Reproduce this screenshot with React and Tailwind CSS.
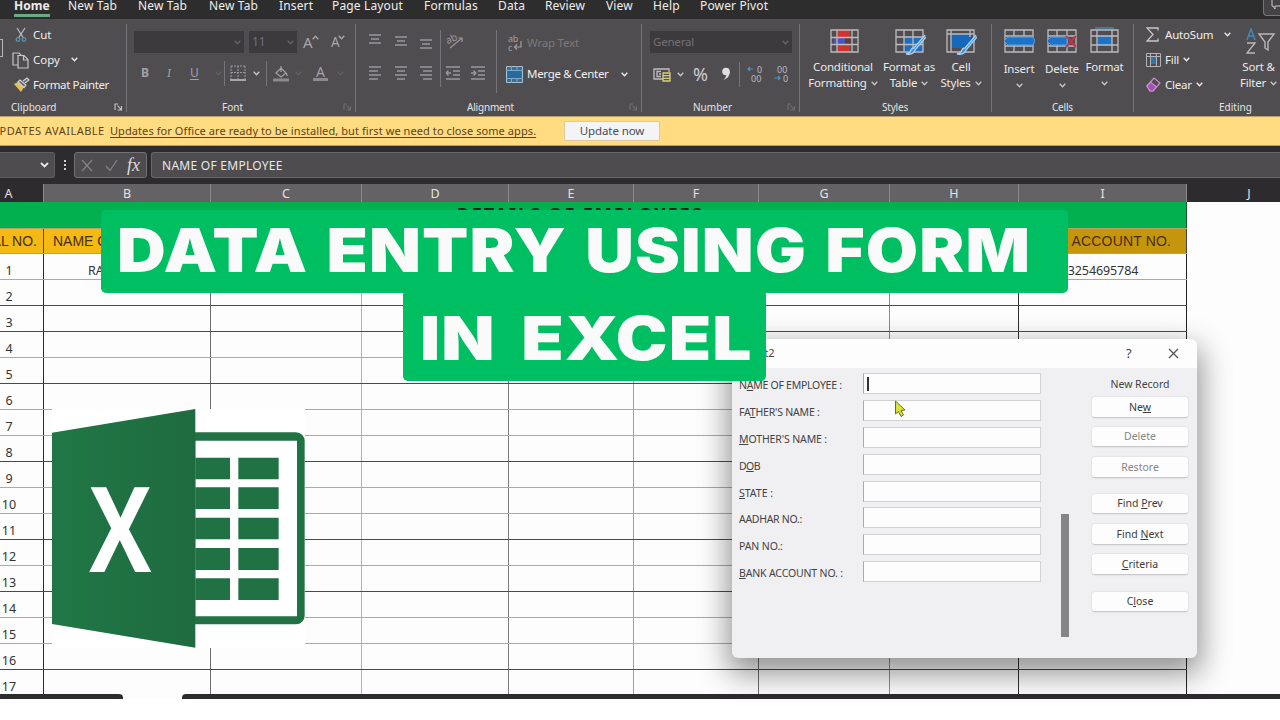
import { useState } from "react";

const tabs = [
    { name: "Home", width: "w-[54px]" },
    { name: "New Tab", width: "w-[70px]" },
    { name: "New Tab", width: "w-[71px]" },
    { name: "New Tab", width: "w-[70px]" },
    { name: "Insert", width: "w-[53px]" },
    { name: "Page Layout", width: "w-[92px]" },
    { name: "Formulas", width: "w-[74px]" },
    { name: "Data", width: "w-[47px]" },
    { name: "Review", width: "w-[61px]" },
    { name: "View", width: "w-[47px]" },
    { name: "Help", width: "w-[47px]" },
    { name: "Power Pivot", width: "w-[80px]" },
];

const columns = [
    { name: "A", width: "w-[44px]", head: "bg-[#2d2b2e] pr-[26px]", line: "border-[#2a2a2a]" },
    { name: "B", width: "w-[167px]", head: "bg-[#646264]", line: "border-[#6e6e6e]" },
    { name: "C", width: "w-[151px]", head: "bg-[#646264]", line: "border-[#b4b4b4]" },
    { name: "D", width: "w-[147px]", head: "bg-[#646264]", line: "border-[#7c7c7c]" },
    { name: "E", width: "w-[125px]", head: "bg-[#646264]", line: "border-[#a0a0a0]" },
    { name: "F", width: "w-[125px]", head: "bg-[#646264]", line: "border-[#6e6e6e]" },
    { name: "G", width: "w-[131px]", head: "bg-[#646264]", line: "border-[#8c8c8c]" },
    { name: "H", width: "w-[129px]", head: "bg-[#646264]", line: "border-[#2f2f2f]" },
    { name: "I", width: "w-[168px]", head: "bg-[#646264]", line: "border-[#222222]" },
];

// some row borders are drawn darker than the others
const darkRows = [2, 3, 5, 8, 11, 13, 16];
const rows = Array.from({ length: 17 }, (_, i) => i + 1);

const fields = [
    { before: "N", key: "A", after: "ME OF EMPLOYEE :", track: "tracking-[-0.26px]" },
    { before: "FA", key: "T", after: "HER'S NAME :", track: "tracking-[-0.2px]" },
    { before: "", key: "M", after: "OTHER'S NAME :", track: "tracking-[-0.12px]" },
    { before: "D", key: "O", after: "B", track: "tracking-[-0.6px]" },
    { before: "", key: "S", after: "TATE :", track: "tracking-[0px]" },
    { before: "AADHAR NO.:", key: "", after: "", track: "tracking-[-0.3px]" },
    { before: "PAN NO.:", key: "", after: "", track: "tracking-[-0.1px]" },
    { before: "", key: "B", after: "ANK ACCOUNT NO. :", track: "tracking-[-0.15px]" },
];

const actions = [
    { before: "Ne", key: "w", after: "", gap: "mt-[7px]", color: "text-[#3c3c3c]" },
    { before: "Delete", key: "", after: "", gap: "mt-[9px]", color: "text-[#858585]" },
    { before: "Restore", key: "", after: "", gap: "mt-[10px]", color: "text-[#858585]" },
    { before: "Find ", key: "P", after: "rev", gap: "mt-[16px]", color: "text-[#3c3c3c]" },
    { before: "Find ", key: "N", after: "ext", gap: "mt-[10px]", color: "text-[#3c3c3c]" },
    { before: "", key: "C", after: "riteria", gap: "mt-[9.500px]", color: "text-[#3c3c3c]" },
    { before: "C", key: "l", after: "ose", gap: "mt-[17px]", color: "text-[#3c3c3c]" },
];

function Chevron({ className = "" }) {
    return (
        <svg className={`shrink-0 ${className}`} width="7" height="5" viewBox="0 0 7 5" fill="none" stroke="currentColor" strokeWidth="1.3">
            <path d="M.7.8 3.5 3.7 6.3.8" />
        </svg>
    );
}

function Launcher({ className = "" }) {
    return (
        <svg className={className} width="9" height="8" viewBox="0 0 9 8" fill="none" stroke="currentColor" strokeWidth="1.1">
            <path d="M1 7V1h3M3.5 2.5 7 6.3M7.5 3v4h-4" />
        </svg>
    );
}

function Lines({ d }) {
    return (
        <svg width="14" height="15" viewBox="0 0 14 15" fill="none" stroke="#99979a" strokeWidth="1.3">
            <path d={d} />
        </svg>
    );
}

function Divider({ className }) {
    return <div className={`w-px shrink-0 bg-[#77757a] ${className}`} />;
}

function Group({ label, className, labelClass, launcher, children }) {
    return (
        <section className={`flex h-[97px] shrink-0 flex-col ${className}`}>
            <div className="flex h-[80px] w-full">
                <div className="h-full min-w-0 flex-1">{children}</div>
                <Divider className="mt-[5px] h-[88px]" />
            </div>
            <div className="flex h-[17px] items-center justify-between pr-[4px] pb-[1px]">
                <span className={`text-[10px] leading-[14px] text-[#e4e4e4] ${labelClass}`}>{label}</span>
                {launcher && <Launcher className={launcher} />}
            </div>
        </section>
    );
}

function Clipboard() {
    return (
        <Group label="Clipboard" className="w-[127px]" labelClass="ml-[11px] tracking-[0px]" launcher="text-[#c8c8c8]">
            <div className="flex h-full">
                <div className="mt-[20px] h-[18px] w-[3px] border-y border-r border-[#b5b5b5]" />
                <div className="flex flex-col pt-[3px] text-[11.5px] leading-[16px] text-[#eeeeee]">
                    <div className="flex h-[25px] items-center">
                        <svg className="ml-[12px] mr-[6px]" width="12" height="16" viewBox="0 0 12 16" fill="none" strokeWidth="1.3">
                            <path d="m2 1 6.500 10M10 1 3.500 11" stroke="#b9bcc0" />
                            <circle cx="3" cy="12.500" r="1.800" stroke="#5a8fb4" />
                            <circle cx="9" cy="12.500" r="1.800" stroke="#5a8fb4" />
                        </svg>
                        Cut
                    </div>
                    <div className="flex h-[25px] items-center">
                        <svg className="ml-[9px] mr-[3px]" width="18" height="18" viewBox="0 0 18 18" fill="none" stroke="#c4c4c4" strokeWidth="1.2">
                            <path d="M6 14H1V2h6l2 2M6 4.500h6l4 4V17H6zM11.500 4.500V9H16" />
                        </svg>
                        Copy
                        <Chevron className="ml-[11px]" />
                    </div>
                    <div className="flex h-[25px] items-center whitespace-nowrap tracking-[-0.35px]">
                        <svg className="ml-[10px] mr-[3px]" width="17" height="16" viewBox="0 0 17 16" fill="none">
                            <path d="m1 7 4-2 6 5-3 5z" fill="#e5c34f" />
                            <path d="m5 5 2-2 6 5-2 2.500zM10 4l4-3 2 2-4 3" fill="#6a686b" stroke="#d2d2d2" strokeWidth="1.200" />
                        </svg>
                        Format Painter
                    </div>
                </div>
            </div>
        </Group>
    );
}

function FontGroup() {
    return (
        <Group label="Font" className="w-[229px]" labelClass="ml-[95px]" launcher="text-[#6f6d70]">
            <div className="flex h-[22px] items-center pt-[23px] pl-[7px]">
                <div className="flex h-[22px] w-[110px] items-center justify-end bg-[#3c3a3d] pr-[3px] text-[#69676a]"><Chevron /></div>
                <div className="ml-[5px] flex h-[22px] w-[48px] items-center justify-between bg-[#3c3a3d] px-[3px] text-[12px] text-[#727073]">
                    11<Chevron className="text-[#69676a]" />
                </div>
                <div className="ml-[6px] flex items-start text-[#a9a7aa]"><span className="w-[9px] text-[15px] leading-[17px]">A</span><Chevron className="mt-[1px] rotate-180" /></div>
                <div className="ml-[12px] flex items-start text-[#a9a7aa]"><span className="w-[7px] text-[13.500px] leading-[16px]">A</span><Chevron className="mt-[1px]" /></div>
            </div>
            <div className="mt-[18px] flex h-[26px] items-center text-[12px] leading-[16px] text-[#a3a1a4]">
                <b className="ml-[14px] w-[26px]">B</b>
                <i className="w-[23px] font-serif">I</i>
                <span className="w-[25px] underline underline-offset-2">U</span>
                <Chevron className="text-[#626063]" />
                <Divider className="ml-[2px] h-[25px]" />
                <svg className="ml-[5px]" width="16" height="16" viewBox="0 0 16 16" fill="none" stroke="#9b999c">
                    <path d="M1 1h14M1 7.500h14M1 1v13M8 1v13M15 1v13" strokeDasharray="2 1" />
                    <path d="M0 15h16" stroke="#c7c5c8" strokeWidth="1.500" />
                </svg>
                <Chevron className="ml-[7px] text-[#c8c8c8]" />
                <Divider className="ml-[6px] h-[25px]" />
                <svg className="ml-[6px]" width="16" height="17" viewBox="0 0 16 17" fill="none" stroke="#a3a1a4" strokeWidth="1.200">
                    <path d="m3 8 5-5 5 5-5 4zM8 1v6M13 8l1.500 3" />
                    <path d="M0 15h16" stroke="#8c8a8d" strokeWidth="3" />
                </svg>
                <Chevron className="ml-[6px] text-[#626063]" />
                <span className="ml-[11px] w-[15px] border-b-[3px] border-[#8c8a8d] text-center text-[14px] leading-[13px]">A</span>
                <Chevron className="ml-[9px] text-[#626063]" />
            </div>
        </Group>
    );
}

function Alignment() {
    return (
        <Group label="Alignment" className="w-[286px]" labelClass="ml-[111px] tracking-[-0.2px]" launcher="text-[#6f6d70]">
            <div className="flex h-full">
                <div className="ml-[12px] grid w-[72px] grid-cols-[26px_25px_21px] grid-rows-[32px_32px] pt-[14px]">
                    <Lines d="M1 2h12M3 6h8M1 10h12" />
                    <Lines d="M1 4h12M3 8h8M1 12h12" />
                    <div className="pt-[3px]"><Lines d="M1 4h12M3 8h8M1 12h12" /></div>
                    <Lines d="M1 2h12M1 6h9M1 10h12M1 14h9" />
                    <Lines d="M1 2h12M3 6h8M1 10h12M3 14h8" />
                    <Lines d="M1 2h12M4 6h9M1 10h12M4 14h9" />
                </div>
                <Divider className="mt-[11px] h-[57px]" />
                <div className="flex w-[55px] flex-col pt-[13px] pl-[5px]">
                    <svg width="18" height="18" viewBox="0 0 18 18" fill="none" stroke="#99979a" strokeWidth="1.2">
                        <text x="0" y="10" fontSize="10" fill="#99979a" stroke="none" transform="rotate(-25 6 8)">ab</text>
                        <path d="M4 16 16 6M12.500 6H16v4" />
                    </svg>
                    <div className="mt-[15px] flex gap-[11px]">
                        <Lines d="M0 2h14M7 6h7M7 10h7M0 14h14M5 8H0M2.500 5.500 0 8l2.500 2.500" />
                        <Lines d="M0 2h14M7 6h7M7 10h7M0 14h14M0 8h5M2.500 5.500 5 8l-2.500 2.500" />
                    </div>
                </div>
                <Divider className="mt-[11px] h-[63px]" />
                <div className="flex flex-col pt-[12px] text-[11.500px] leading-[16px] whitespace-nowrap">
                    <div className="ml-[11px] flex h-[24px] items-center tracking-[-0.2px] text-[#7b797c]">
                        <svg className="mr-[4px]" width="15" height="18" viewBox="0 0 15 18" fill="none" stroke="#a19fa2" strokeWidth="1.2">
                            <text x="0" y="8" fontSize="9" fill="#a19fa2" stroke="none">ab</text>
                            <text x="0" y="17" fontSize="9" fill="#a19fa2" stroke="none">c</text>
                            <path d="M13 7v6H7M9 10.500 6.500 13 9 15.500" />
                        </svg>
                        Wrap Text
                    </div>
                    <div className="mt-[7px] ml-[9px] flex h-[24px] items-center tracking-[-0.3px] text-[#f0f0f0]">
                        <svg className="mr-[4px]" width="17" height="17" viewBox="0 0 17 17" fill="none">
                            <path d="M.500.500h16v16H.500z" fill="#3f6d8f" stroke="#a9c1d2" />
                            <path d="M2 5h13v7H2z" fill="#27699c" />
                            <path d="M5.500 0v4M11 0v4M5.500 13v4M11 13v4M0 4.500h17M0 12.500h17" stroke="#7fa9c6" />
                        </svg>
                        Merge &amp; Center
                        <Chevron className="ml-[12px]" />
                    </div>
                </div>
            </div>
        </Group>
    );
}

function NumberGroup() {
    return (
        <Group label="Number" className="w-[158px]" labelClass="ml-[51px]" launcher="text-[#6f6d70]">
            <div className="pt-[12px] pl-[8px]">
                <div className="flex h-[22px] w-[142px] items-center justify-between bg-[#3c3a3d] px-[3px] text-[11.500px] tracking-[-0.2px] text-[#727073]">
                    General<Chevron className="text-[#69676a]" />
                </div>
                <div className="mt-[7px] flex h-[28px] items-center pl-[3px]">
                    <svg width="19" height="15" viewBox="0 0 19 15" fill="none" stroke="#c0bec1" strokeWidth="1.3">
                        <path d="M10 12H1V2h15v3" />
                        <path d="M8 4.500H4v5h4M6 7h2" />
                        <path d="M10 6h7v8h-7zM10 8.700h7M10 11.400h7" stroke="#d9cf78" />
                    </svg>
                    <Chevron className="ml-[5px] text-[#c8c8c8]" />
                    <span className="ml-[9px] w-[27px] text-[18px] leading-[20px] text-[#cfcdd0]">%</span>
                    <svg className="mr-[8px] ml-[1px]" width="10" height="14" viewBox="0 0 10 14" fill="#dedede">
                        <circle cx="5" cy="4.500" r="3.800" />
                        <path d="M8.800 4.500c0 4-2 7-6.300 8.500 2-2 3-4 3-6z" />
                    </svg>
                    <Divider className="h-[25px]" />
                    <svg className="ml-[7px]" width="16" height="18" viewBox="0 0 16 18" fill="#bcbabd" fontSize="9">
                        <path d="M6 4H1M3 2 1 4l2 2" fill="none" stroke="#4f94bf" strokeWidth="1.200" />
                        <text x="10" y="8">0</text>
                        <text x="4" y="16.500">00</text>
                    </svg>
                    <svg className="ml-[10px]" width="16" height="18" viewBox="0 0 16 18" fill="#bcbabd" fontSize="9">
                        <path d="M1 13h6M5 11l2 2-2 2" fill="none" stroke="#4f94bf" strokeWidth="1.200" />
                        <text x="4" y="8">00</text>
                        <text x="10" y="16.500">0</text>
                    </svg>
                </div>
            </div>
        </Group>
    );
}

function BigButton({ className, icon, first, second }) {
    return (
        <div className={`flex shrink-0 flex-col items-center text-[11.500px] leading-[16px] tracking-[-0.2px] whitespace-nowrap text-[#eaeaea] ${className}`}>
            {icon}
            <span className="h-[16px]">{first}</span>
            <span className="flex h-[16px] items-center gap-[4px]">{second}<Chevron className="text-[#c8c8c8]" /></span>
        </div>
    );
}

function Styles() {
    return (
        <Group label="Styles" className="w-[192px]" labelClass="ml-[82px] tracking-[-0.2px]">
            <div className="flex pt-[10px]">
                <BigButton
                    className="ml-[6px] w-[74px]"
                    first="Conditional"
                    second="Formatting"
                    icon={
                        <svg className="mb-[6px] ml-[2px]" width="29" height="24" viewBox="0 0 29 24" fill="none" stroke="#bdbbbe" strokeWidth="1.300">
                            <path d="M7 1h13v22H7z" fill="#d2322d" stroke="none" />
                            <path d="M4 9h11v6H4z" fill="#4e55b4" stroke="none" />
                            <path d="M15 9h7v6h-7z" fill="#5c4040" stroke="none" />
                            <path d="M1 1h27v22H1zM1 8.500h27M1 15.500h27M7 1v22M22 1v22" />
                        </svg>
                    }
                />
                <BigButton
                    className="w-[58px]"
                    first="Format as"
                    second="Table"
                    icon={
                        <svg className="mb-[4px] ml-[2px]" width="31" height="26" viewBox="0 0 31 26" fill="none" stroke="#bdbbbe" strokeWidth="1.300">
                            <path d="M9 8h19v14H9z" fill="#1f6fc0" stroke="none" />
                            <path d="M1 1h27v22H1zM1 8h27M1 15.500h27M9 1v22M18 1v22" />
                            <path d="M30 6 19 19c-2 0-3 1-4 4-1 1-3 2-4 2 3 1 8 0 9-4L31 8" fill="#3a8fd6" stroke="#a9cfee" />
                        </svg>
                    }
                />
                <BigButton
                    className="w-[46px]"
                    first="Cell"
                    second="Styles"
                    icon={
                        <svg className="mb-[4px]" width="31" height="26" viewBox="0 0 31 26" fill="none" stroke="#bdbbbe" strokeWidth="1.300">
                            <path d="M5 5h20v14H5z" fill="#1668bd" stroke="none" />
                            <path d="M1 1h27v22H1zM1 5h27M5 1v22M24 1v7" />
                            <path d="M30 6 19 19c-2 0-3 1-4 4-1 1-3 2-4 2 3 1 8 0 9-4L31 8" fill="#3a8fd6" stroke="#a9cfee" />
                        </svg>
                    }
                />
            </div>
        </Group>
    );
}

function Cells() {
    return (
        <Group label="Cells" className="w-[142px]" labelClass="ml-[60px] tracking-[-0.2px]">
            <div className="flex pt-[10px]">
                <BigButton
                    className="ml-[5px] w-[44px]"
                    first="Insert"
                    icon={
                        <svg className="mb-[8px]" width="31" height="24" viewBox="0 0 31 24" fill="none" stroke="#bdbbbe" strokeWidth="1.300">
                            <path d="M1 1h28v22H1zM1 7h28M1 17h28M10 1v22M20 1v22" />
                            <path d="M4 8h25l2 4-2 4H4l-4-4z" fill="#1c74c8" stroke="#5b9fd8" strokeWidth="1" />
                        </svg>
                    }
                />
                <BigButton
                    className="w-[42px]"
                    first="Delete"
                    icon={
                        <svg className="mb-[8px]" width="30" height="24" viewBox="0 0 30 24" fill="none" stroke="#bdbbbe" strokeWidth="1.300">
                            <path d="M1 1h28v22H1zM1 7h28M1 17h28M10 1v22M20 1v22" />
                            <path d="M4 8h16v8H4l-4-4z" fill="#1c74c8" stroke="#5b9fd8" strokeWidth="1" />
                            <path d="m19 7 10 11M29 7 19 18" stroke="#c2344d" strokeWidth="2" />
                        </svg>
                    }
                />
                <BigButton
                    className="w-[43px]"
                    first="Format"
                    icon={
                        <svg className="mt-[-2px] mb-[6px]" width="29" height="26" viewBox="0 0 29 26" fill="none" stroke="#bdbbbe" strokeWidth="1.300">
                            <path d="M5 1h19" stroke="#4390bd" />
                            <path d="M7 9h15v9H7z" fill="#1c74c8" stroke="none" />
                            <path d="M1 3h27v22H1zM1 9h27M1 18h27M7 3v22M22 3v22" />
                        </svg>
                    }
                />
            </div>
        </Group>
    );
}

function Editing() {
    return (
        <section className="flex h-[97px] w-[146px] shrink-0 flex-col">
            <div className="flex h-[80px]">
                <div className="flex w-[103px] flex-col pt-[3px] pl-[12px] text-[11.500px] leading-[16px] tracking-[-0.2px] text-[#eeeeee]">
                    <div className="flex h-[25px] items-center">
                        <svg className="mr-[6px]" width="13" height="15" viewBox="0 0 13 15" fill="none" stroke="#c6c4c7" strokeWidth="1.300">
                            <path d="M12 3.500V1H1l6 6.500L1 14h11v-2.500" />
                        </svg>
                        AutoSum
                        <Chevron className="ml-[11px]" />
                    </div>
                    <div className="flex h-[25px] items-center">
                        <svg className="mr-[4px]" width="15" height="14" viewBox="0 0 15 14" fill="none" stroke="#b5b3b6">
                            <path d="M4 3h7v8H4z" fill="#2f75a8" stroke="none" />
                            <path d="M.500.500h14v13H.500zM.500 3.500h14M4.500.500v13M10.500.500v13" />
                        </svg>
                        Fill
                        <Chevron className="ml-[4px]" />
                    </div>
                    <div className="flex h-[25px] items-center">
                        <svg className="mr-[4px]" width="15" height="15" viewBox="0 0 15 15" fill="none" stroke="#cf8bd8" strokeWidth="1.200">
                            <path d="m1 9 7-8 6 5-7 8H4z" />
                            <path d="m1 9 3.500-4 6 5L7 14H4z" fill="#a44fb3" />
                        </svg>
                        Clear
                        <Chevron className="ml-[4px]" />
                    </div>
                </div>
                <BigButton
                    className="w-[43px] pt-[9px]"
                    first="Sort &"
                    second="Filter"
                    icon={
                        <svg className="ml-[4px] mb-[4px]" width="30" height="27" viewBox="0 0 30 27" fill="none" stroke="#b9b7ba" strokeWidth="1.400">
                            <path d="m1 12 4-11 4 11M2.500 8h5" stroke="#4389bb" />
                            <path d="M1 15h8L1 25h8M13 6h15l-6 8v8l-3-2v-6z" />
                        </svg>
                    }
                />
            </div>
            <div className="flex h-[17px] items-center pb-[1px] pl-[85px] text-[10px] leading-[14px] text-[#e4e4e4]">Editing</div>
        </section>
    );
}

function FormulaBar() {
    return (
        <div className="flex h-[37px] border-b-[5px] border-[#2d2b2e] bg-[#2d2b2e] pt-[6px] text-[#e8e8e8]">
            <div className="flex w-[55px] items-center justify-end rounded-r-[3px] border border-l-0 border-[#5e5c5f] bg-[#4e4c4f] pr-[5px]">
                <svg width="9" height="6" viewBox="0 0 9 6" fill="none" stroke="currentColor" strokeWidth="1.800"><path d="m1 1 3.500 3.500L8 1" /></svg>
            </div>
            <div className="flex w-[19px] flex-col items-center justify-center gap-[2px]">
                <div className="size-[2px] bg-[#d0d0d0]" />
                <div className="size-[2px] bg-[#d0d0d0]" />
                <div className="size-[2px] bg-[#d0d0d0]" />
            </div>
            <div className="flex w-[73px] items-center rounded-[3px] border border-[#737174] bg-[#4e4c4f] pl-[6px]">
                <svg width="38" height="13" viewBox="0 0 38 13" fill="none" stroke="#828083" strokeWidth="1.300">
                    <path d="m1 1 10 11M11 1 1 12M25 7l4 4.500L36 1" />
                </svg>
                <span className="ml-[8px] font-[Liberation_Serif] text-[18px] leading-[20px] text-[#dddddd] italic">fx</span>
            </div>
            <div className="ml-[4px] flex flex-1 items-center rounded-l-[3px] border border-r-0 border-[#69676a] bg-[#4e4c4f] pt-[1px] pl-[10px] text-[12px] tracking-[0.27px]">NAME OF EMPLOYEE</div>
        </div>
    );
}

function Sheet() {
    return (
        <main className="flex h-[511px] flex-col overflow-hidden bg-[#fdfdfd] text-[#333333]">
            <div className="flex h-[19px] shrink-0 bg-[#2d2b2e] pt-px text-[12.500px] leading-[17px] text-[#e2e2e2]">
                {columns.map((col) => (
                    <div key={col.name} className={`flex shrink-0 items-center justify-center border-r border-[#8b898c] pt-px ${col.width} ${col.head}`}>{col.name}</div>
                ))}
                <div className="flex flex-1 items-center justify-center pt-px pl-[31px]">J</div>
            </div>
            <div className="flex h-[26px] w-[1187px] shrink-0 items-start justify-center border-r border-[#155a2e] bg-[#02b050] pt-[1px] pr-[26px] text-[18px] leading-[22px] font-bold tracking-[1.900px] text-[#0b2d18]">
                DETAILS OF EMPLOYEES
            </div>
            <div className="flex h-[26px] w-[1187px] shrink-0 border-y border-[#b8a25c] bg-[#c5960c] font-[Liberation_Sans] text-[14px] whitespace-nowrap text-[#4a2d10]">
                <div className="flex w-[44px] shrink-0 items-center justify-end border-r border-[#5b4b1c] bg-[#f4b912] pr-[6px]">SERIAL NO.</div>
                <div className="flex w-[167px] shrink-0 items-center bg-[#f4b912] pl-[9px]">NAME OF EMPLOYEE</div>
                <div className="flex flex-1 items-center justify-end border-r border-[#444444] pr-[15px] tracking-[0.15px]">BANK ACCOUNT NO.</div>
            </div>
            {rows.map((n) => (
                <div key={n} className={`flex h-[26px] w-[1187px] shrink-0 border-b text-[12.500px] leading-[16px] ${darkRows.includes(n) ? "border-[#4a4a4a]" : "border-[#a9a9a9]"}`}>
                    {columns.map((col, i) => (
                        <div key={col.name} className={`flex shrink-0 items-end justify-center border-r ${col.width} ${col.line} ${i === 0 ? "pr-[25px]" : ""}`}>
                            {i === 0 && n}
                            {n === 1 && i === 1 && <span className="mr-[49px]">RAJU</span>}
                            {n === 1 && i === 8 && <span className="mr-[6px] tracking-[-0.1px]">13254695784</span>}
                        </div>
                    ))}
                </div>
            ))}
        </main>
    );
}

function DataForm() {
    const [record, setRecord] = useState("");

    return (
        <div className="absolute top-[339px] left-[732px] flex h-[319px] w-[465px] flex-col overflow-hidden rounded-[6px] bg-[#f0eff2] text-[#444444] shadow-[0_12px_30px_4px_rgba(0,0,0,0.42)]">
            <div className="flex h-[29px] shrink-0 items-center bg-[#fdfdfd] pl-[7px] text-[11px]">
                <span className="flex-1">Sheet2</span>
                <span className="w-[42px] text-[13px]">?</span>
                <svg className="mr-[18px]" width="11" height="11" viewBox="0 0 11 11" stroke="#555555" strokeWidth="1.300"><path d="m1 1 9 9M10 1 1 10" /></svg>
            </div>
            <div className="flex flex-1">
                <div className="w-[309px] pt-[5px] pl-[7px]">
                    {fields.map((field, i) => (
                        <div key={i} className="flex h-[26.880px] items-start">
                            <label className={`w-[124px] shrink-0 pt-[5px] text-[10.500px] leading-[14px] whitespace-nowrap ${field.track}`}>
                                {field.before}<u>{field.key}</u>{field.after}
                            </label>
                            {i === 0 ? (
                                <div className="flex h-[21px] w-[178px] items-center border border-[#d2d1d4] border-l-[#aaaaaa] bg-[#fdfdfd] pl-[3px]">
                                    <div className="h-[14px] w-[2px] bg-[#333333]" />
                                    <input className="w-full outline-none" value={record} onChange={(e) => setRecord(e.target.value)} />
                                </div>
                            ) : (
                                <input className="h-[21px] w-[178px] border border-[#d2d1d4] border-l-[#aaaaaa] bg-[#fdfdfd] outline-none" />
                            )}
                        </div>
                    ))}
                </div>
                <div className="mt-[146px] ml-[20px] h-[123px] w-[8px] bg-[#858585]" />
                <div className="ml-[23px] flex w-[96px] flex-col pt-[9px] text-center text-[10.500px] leading-[14px]">
                    <span className="h-[13px]">New Record</span>
                    {actions.map((action) => (
                        <button key={action.before + action.key} className={`h-[20.500px] shrink-0 rounded-[3px] border-b border-[#c9c8cb] bg-[#fdfdfd] shadow-[0_0_2px_rgba(0,0,0,0.15)] ${action.gap} ${action.color}`}>
                            {action.before}<u>{action.key}</u>{action.after}
                        </button>
                    ))}
                </div>
            </div>
        </div>
    );
}

function ExcelLogo() {
    return (
        <svg className="absolute top-[409px] left-[52px]" width="253" height="239" viewBox="0 0 759 717">
            <defs>
                <linearGradient id="door" x1="0" x2="1" y1="0" y2="0">
                    <stop offset="0" stopColor="#207746" />
                    <stop offset="1" stopColor="#1e6b3f" />
                </linearGradient>
            </defs>
            <path d="M0 0h759v717H0z" fill="#fff" />
            <rect x="400" y="70" width="358" height="576" rx="26" fill="#207245" />
            <path d="M430 95h305v527H430z" fill="#fff" />
            <path d="M430 146h104v65H430zM559 146h121v65H559zM430 235h104v65H430zM559 235h121v65H559zM430 326h104v65H430zM559 326h121v65H559zM430 417h104v66H430zM559 417h121v66H559zM430 508h104v65H430zM559 508h121v65H559z" fill="#207245" />
            <path d="M0 71 430 0v716L0 645z" fill="url(#door)" />
            <text x="112" y="489" fontFamily="Open Sans" fontWeight="700" fontSize="358" fill="#fff" textLength="186" lengthAdjust="spacingAndGlyphs">X</text>
        </svg>
    );
}

function Cursor() {
    return (
        <svg className="absolute top-[400px] left-[894px]" width="13" height="18" viewBox="0 0 13 18">
            <path d="M1.500 1v13l3-2.500 2.500 5 2.500-1.500-2.500-4.500 4-.500z" fill="#d8e436" stroke="#6a7020" />
        </svg>
    );
}

export default function App() {
    return (
        <div className="relative h-[720px] w-[1280px] overflow-hidden bg-white font-['Noto_Sans',sans-serif]">
            <nav className="flex h-[19px] bg-[#2d2d2d] pl-[14px] text-[12px] leading-[12px] text-[#ededed]">
                {tabs.map((tab, i) => (
                    <div key={i} className={`shrink-0 whitespace-nowrap ${tab.width}`}>
                        <span className={i === 0 ? "inline-block h-[17px] border-b-[3px] border-[#6dab86] font-bold" : "inline-block tracking-[0.15px]"}>{tab.name}</span>
                    </div>
                ))}
                <div className="ml-auto flex h-[16px] w-[17px] justify-end rounded-bl-[4px] border-b border-l border-[#777777] bg-[#454346]">
                    <svg width="9" height="10" viewBox="0 0 9 10" fill="none" stroke="#cccccc"><path d="M9 6H4v3L2 6H1V0" /></svg>
                </div>
            </nav>
            <div className="flex h-[97px] bg-[#4f4d50]">
                <Clipboard />
                <FontGroup />
                <Alignment />
                <NumberGroup />
                <Styles />
                <Cells />
                <Editing />
            </div>
            <div className="flex h-[30px] items-center border-y border-[#b59f67] bg-[#ffdc82] text-[11px] whitespace-nowrap text-[#5b4420]">
                <span className="ml-[-9px] w-[119px] pt-px tracking-[0.500px]">UPDATES AVAILABLE</span>
                <span className="w-[454px] pt-px tracking-[0.080px] underline underline-offset-2">Updates for Office are ready to be installed, but first we need to close some apps.</span>
                <button className="h-[20px] w-[96px] rounded-[2px] border border-[#dcc9a0] bg-[#f4f3f5] text-[11.500px] tracking-[-0.100px] text-[#444f60]">Update now</button>
            </div>
            <FormulaBar />
            <Sheet />
            {/* sheet tab strip */}
            <div className="flex h-[5px] justify-between bg-[#fdfdfd]">
                <div className="w-[123px] rounded-tr-[4px] bg-[#2d2b2e]" />
                <div className="w-[1098px] rounded-tl-[4px] bg-[#2d2b2e]" />
            </div>

            <DataForm />
            <Cursor />
            <ExcelLogo />

            <h1 className="absolute top-[210px] left-[101px] flex w-[967px] flex-col items-start font-[Inter] text-[60px] leading-[72px] font-black whitespace-nowrap text-[#fafafa]">
                <span className="flex h-[83px] w-[967px] items-center rounded-[5px] bg-[#00bf63] pb-[3px] pl-[16px]">
                    <span className="origin-left scale-x-[1.125] tracking-[1px] [word-spacing:3.300px]">DATA ENTRY USING FORM</span>
                </span>
                <span className="mt-[-3px] ml-[302px] flex h-[91px] w-[363px] items-center rounded-[5px] bg-[#00bf63] pt-[4px] pl-[17px]">
                    <span className="origin-left scale-x-[1.155] tracking-[1px] [word-spacing:9px]">IN EXCEL</span>
                </span>
            </h1>
        </div>
    );
}
